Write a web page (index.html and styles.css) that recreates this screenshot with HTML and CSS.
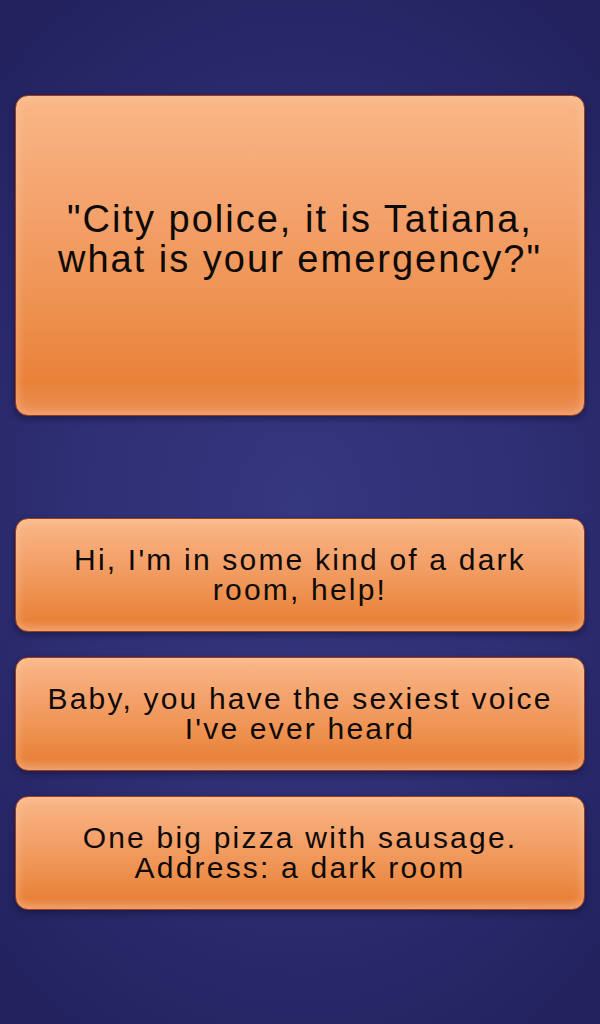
FILE: index.html
```html
<!DOCTYPE html>
<html>
<head>
<meta charset="utf-8">
<link rel="stylesheet" href="styles.css">
</head>
<body>
<div class="screen">
  <div class="card question">
    <p>"City police, it is Tatiana,<br>what is your emergency?"</p>
  </div>
  <div class="answers">
    <div class="card answer"><p>Hi, I'm in some kind of a dark<br>room, help!</p></div>
    <div class="card answer"><p>Baby, you have the sexiest voice<br>I've ever heard</p></div>
    <div class="card answer"><p>One big pizza with sausage.<br>Address: a dark room</p></div>
  </div>
</div>
</body>
</html>
```
FILE: styles.css
```css
html, body {
  margin: 0;
  padding: 0;
  height: 100%;
}
body {
  background: radial-gradient(ellipse 75% 60% at 50% 50%, #35377f 0%, #2e2f74 50%, #23225f 100%);
  font-family: "Liberation Sans", Arial, sans-serif;
  color: #0d0a08;
}
.screen {
  box-sizing: border-box;
  height: 1024px;
  padding: 95px 15px 0;
  display: flex;
  flex-direction: column;
}
.card {
  box-sizing: border-box;
  border: 1.5px solid #9a3c1c;
  border-radius: 13px;
  background: linear-gradient(180deg, #f9b787 0%, #f4a26c 35%, #ee9251 65%, #e98139 90%, #eb9057 100%);
  box-shadow: inset 0 0 10px 2px rgba(255, 220, 190, 0.35), 0 3px 6px rgba(10, 8, 40, 0.45);
  display: flex;
  align-items: center;
  justify-content: center;
  text-align: center;
}
.card p {
  margin: 0;
}
.question {
  height: 321px;
  padding-bottom: 33px;
}
.question p {
  font-size: 38px;
  line-height: 40px;
  letter-spacing: 2px;
}
.answers {
  margin-top: 102px;
  display: flex;
  flex-direction: column;
  gap: 25px;
}
.answer {
  height: 114px;
}
.answer p {
  font-size: 30px;
  line-height: 30px;
  letter-spacing: 2.2px;
}
```
